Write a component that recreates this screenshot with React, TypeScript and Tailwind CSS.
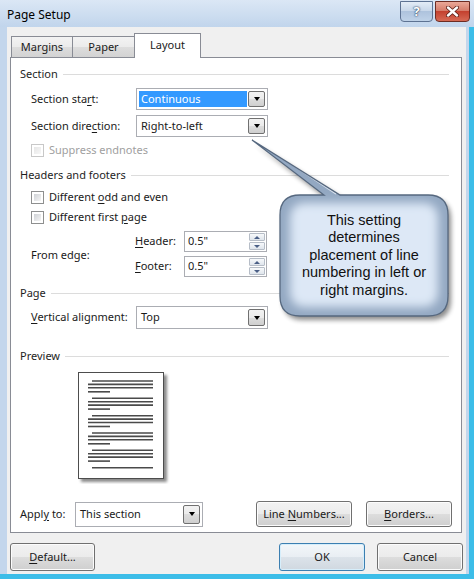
import React from "react"

// access-key underline
function U({ children }: { children: React.ReactNode }) {
  return <span className="underline decoration-1 underline-offset-[2px]">{children}</span>
}

function DownArrow() {
  return <span className="h-0 w-0 border-x-[3.5px] border-t-[4px] border-x-transparent border-t-black" />
}

function Combo({
  value,
  highlight = false,
  size,
}: {
  value: string
  highlight?: boolean
  size: string
}) {
  return (
    <div className={`flex items-stretch border border-[#abadb3] bg-white p-[2px] ${size}`}>
      <div className="flex flex-1 items-center pr-[1px]">
        <span
          className={`flex h-full w-full items-center px-[2px] ${
            highlight ? "bg-[#3399ff] text-white" : ""
          }`}
        >
          {value}
        </span>
      </div>
      <div className="flex w-[17px] items-center justify-center rounded-[2px] border border-[#707070] bg-[linear-gradient(#f2f2f2,#ebebeb_50%,#dddddd_50%,#cfcfcf)]">
        <DownArrow />
      </div>
    </div>
  )
}

function Spin({ value }: { value: string }) {
  return (
    <div className="flex h-[21px] w-[83px] border border-[#abadb3] bg-white">
      <span className="flex flex-1 items-center px-[3px]">{value}</span>
      <div className="flex w-[17px] flex-col gap-px py-px pr-px">
        <div className="flex flex-1 items-center justify-center rounded-[1px] border border-[#b6bdc7] bg-[linear-gradient(#f7f9fb,#dfe5ec)]">
          <span className="h-0 w-0 border-x-[3px] border-b-[3px] border-x-transparent border-b-[#4a5f86]" />
        </div>
        <div className="flex flex-1 items-center justify-center rounded-[1px] border border-[#b6bdc7] bg-[linear-gradient(#f7f9fb,#dfe5ec)]">
          <span className="h-0 w-0 border-x-[3px] border-t-[3px] border-x-transparent border-t-[#4a5f86]" />
        </div>
      </div>
    </div>
  )
}

function Check({ disabled = false }: { disabled?: boolean }) {
  return (
    <div
      className={`h-[13px] w-[13px] border bg-white p-[2px] ${
        disabled ? "border-[#c8c8c8]" : "border-[#8e8f8f]"
      }`}
    >
      <div
        className={`h-full w-full ${
          disabled
            ? "bg-[linear-gradient(135deg,#e6e6e6,#f7f7f7)]"
            : "bg-[linear-gradient(135deg,#cfd2d6,#f5f5f5)]"
        }`}
      />
    </div>
  )
}

function Heading({ children }: { children: React.ReactNode }) {
  return (
    <div className="mr-[3px] flex h-[16px] items-center gap-[5px] text-[#1e1e1e]">
      <span>{children}</span>
      <div className="h-px flex-1 bg-[#dcdcdc]" />
    </div>
  )
}

function WinButton({
  children,
  size,
  primary = false,
}: {
  children: React.ReactNode
  size: string
  primary?: boolean
}) {
  return (
    <div
      className={`flex items-center justify-center rounded-[3px] border ${size} ${
        primary
          ? "border-[#3c7fb1] bg-[linear-gradient(#f3f7fa,#e9eef3_50%,#dce3ea_50%,#d0d8e0)] shadow-[inset_0_0_0_1px_#d6eefb]"
          : "border-[#707070] bg-[linear-gradient(#f2f2f2,#ebebeb_50%,#dddddd_50%,#cfcfcf)] shadow-[inset_0_0_0_1px_#fcfcfc]"
      }`}
    >
      {children}
    </div>
  )
}

function PagePreview() {
  const groups = [9, 26.3, 43.7, 61, 78.3]
  return (
    <svg width="92" height="112" viewBox="0 0 92 112">
      <defs>
        <filter id="pshadow" x="-10%" y="-10%" width="130%" height="130%">
          <feGaussianBlur stdDeviation="1.6" />
        </filter>
      </defs>
      <rect x="3" y="3" width="86" height="107" fill="#8a8a8a" filter="url(#pshadow)" />
      <rect x="0.5" y="0.5" width="85" height="106" fill="#ffffff" stroke="#4d4d4d" />
      {groups.map((g) => (
        <g key={g} stroke="#4a4a4a" strokeWidth="1.6">
          <line x1="14" y1={g} x2="75" y2={g} />
          <line x1="10" y1={g + 3.4} x2="75" y2={g + 3.4} />
          <line x1="10" y1={g + 6.8} x2="75" y2={g + 6.8} />
          <line x1="10" y1={g + 10.8} x2="32" y2={g + 10.8} />
        </g>
      ))}
      <line x1="14" y1="95.7" x2="75" y2="95.7" stroke="#4a4a4a" strokeWidth="1.6" />
    </svg>
  )
}

function Callout() {
  const shape =
    "M60,65 L84,65 L12,10 L100,65 L188,65 Q208,65 208,85 L208,166 Q208,186 188,186 L60,186 Q40,186 40,166 L40,85 Q40,65 60,65 Z"
  return (
    <>
      <svg
        className="pointer-events-none absolute left-[240px] top-[130px]"
        width="222"
        height="200"
        viewBox="0 0 222 200"
      >
        <defs>
          <filter id="cshadow" x="-20%" y="-20%" width="140%" height="140%">
            <feGaussianBlur stdDeviation="2.5" />
          </filter>
          <filter id="glow" x="-20%" y="-20%" width="140%" height="140%">
            <feGaussianBlur stdDeviation="5" />
          </filter>
          <clipPath id="cclip">
            <path d={shape} />
          </clipPath>
        </defs>
        <path d={shape} transform="translate(3,4)" fill="#000" opacity="0.45" filter="url(#cshadow)" />
        <path d={shape} fill="#93a8c2" />
        <g clipPath="url(#cclip)">
          <rect x="50" y="73" width="148" height="104" rx="14" fill="#dde8f6" filter="url(#glow)" />
          <path d="M18,12 L96,64" stroke="#e9f0f8" strokeWidth="1.5" opacity="0.8" />
        </g>
        <path d={shape} fill="none" stroke="#56687f" strokeWidth="1.3" />
      </svg>
      <div className="absolute left-[280px] top-[195px] flex h-[121px] w-[168px] flex-col items-center justify-center text-center font-['Liberation_Sans',Arial,sans-serif] text-[14.5px] leading-[17.5px] text-[#111]">
        <span>This setting</span>
        <span>determines</span>
        <span>placement of line</span>
        <span>numbering in left or</span>
        <span>right margins.</span>
      </div>
    </>
  )
}

export default function App() {
  return (
    <div className="relative flex h-[579px] w-[474px] flex-col overflow-hidden bg-[#c3d6ec] font-['Noto_Sans','Open_Sans',sans-serif] text-[11px] text-[#1a1a1a]">
      {/* title bar */}
      <div className="flex h-[27px] items-start bg-[linear-gradient(#dbe7f5,#c1d5ec)] pl-[7px] pr-[4px]">
        <span className="mt-[6px] text-[12px] text-black">Page Setup</span>
        <div className="ml-auto mt-px flex gap-[2px]">
          <div className="flex h-[21px] w-[33px] items-center justify-center rounded-b-[4px] border border-[#5d7292] bg-[linear-gradient(#e3ecf6,#c9d8ea_45%,#aec3dd_50%,#bfd2e8)] text-[13px] font-bold text-white [text-shadow:0_0_2px_#1c3556,0_0_1px_#1c3556]">
            ?
          </div>
          <div className="flex h-[21px] w-[35px] items-center justify-center rounded-b-[4px] border border-[#6d2c23] bg-[linear-gradient(#eaa898,#d67d6b_45%,#c4412f_50%,#d66a55)]">
            <svg width="13" height="11" viewBox="0 0 13 11">
              <path d="M2,1.5 L11,9.5 M11,1.5 L2,9.5" stroke="#5a1d15" strokeWidth="4" strokeLinecap="round" />
              <path d="M2,1.5 L11,9.5 M11,1.5 L2,9.5" stroke="#ffffff" strokeWidth="2.4" strokeLinecap="round" />
            </svg>
          </div>
        </div>
      </div>

      <div className="flex flex-1">
        <div className="w-[7px]" />
        {/* client area */}
        <div className="flex flex-1 flex-col bg-[#f0f0f0] px-[3px] pb-[3px] pt-[6px]">
          {/* tabs */}
          <div className="relative z-10 ml-px flex h-[24px] items-start">
            <div className="mt-[3px] flex h-[21px] w-[62px] items-center justify-center border border-b-0 border-[#898c95] bg-[linear-gradient(#f3f3f3,#ebebeb_50%,#dddddd_50%,#d3d3d3)] pt-px">
              Margins
            </div>
            <div className="-ml-px mt-[3px] flex h-[21px] w-[63px] items-center justify-center border border-b-0 border-[#898c95] bg-[linear-gradient(#f3f3f3,#ebebeb_50%,#dddddd_50%,#d3d3d3)] pt-px">
              Paper
            </div>
            <div className="-ml-px flex h-[25px] w-[67px] items-center justify-center border border-b-0 border-[#898c95] bg-white pb-[2px]">
              Layout
            </div>
          </div>

          {/* panel */}
          <div className="mr-px flex h-[476px] flex-col border border-[#898c95] bg-white px-[9px] pt-[8px]">
            <Heading>Section</Heading>
            <div className="ml-[11px] mt-[6px] flex items-center">
              <span className="w-[105px]">
                Section sta<U>r</U>t:
              </span>
              <Combo value="Continuous" highlight size="h-[22px] w-[132px]" />
            </div>
            <div className="ml-[11px] mt-[5px] flex items-center">
              <span className="w-[105px]">
                Section dire<U>c</U>tion:
              </span>
              <Combo value="Right-to-left" size="h-[22px] w-[132px]" />
            </div>
            <div className="ml-[11px] mt-[5px] flex h-[16px] items-center gap-[5px] text-[#a0a0a0]">
              <Check disabled />
              <span>Suppress endnotes</span>
            </div>

            <div className="mt-[9px]">
              <Heading>Headers and footers</Heading>
            </div>
            <div className="ml-[11px] mt-[6px] flex h-[16px] items-center gap-[5px]">
              <Check />
              <span>
                Different <U>o</U>dd and even
              </span>
            </div>
            <div className="ml-[11px] mt-[4px] flex h-[16px] items-center gap-[5px]">
              <Check />
              <span>
                Different first <U>p</U>age
              </span>
            </div>
            <div className="ml-[11px] mt-[6px] flex items-center">
              <span className="w-[104px] pt-[3px]">From edge:</span>
              <div className="flex flex-col gap-[4px]">
                <div className="flex items-center">
                  <span className="w-[49px]">
                    <U>H</U>eader:
                  </span>
                  <Spin value={'0.5"'} />
                </div>
                <div className="flex items-center">
                  <span className="w-[49px]">
                    <U>F</U>ooter:
                  </span>
                  <Spin value={'0.5"'} />
                </div>
              </div>
            </div>

            <div className="mt-[8px]">
              <Heading>Page</Heading>
            </div>
            <div className="ml-[11px] mt-[5px] flex items-center">
              <span className="w-[105px]">
                <U>V</U>ertical alignment:
              </span>
              <Combo value="Top" size="h-[23px] w-[132px]" />
            </div>

            <div className="mt-[19px]">
              <Heading>Preview</Heading>
            </div>
            <div className="ml-[58px] mt-[8px] h-[110px]">
              <PagePreview />
            </div>

            <div className="mt-[19px] flex h-[26px] items-center">
              <span className="w-[55px]">
                Appl<U>y</U> to:
              </span>
              <Combo value="This section" size="h-[25px] w-[128px]" />
              <div className="ml-auto flex gap-[14px]">
                <WinButton size="h-[26px] w-[96px]">
                  <span>
                    Line <U>N</U>umbers...
                  </span>
                </WinButton>
                <WinButton size="h-[26px] w-[86px]">
                  <span>
                    <U>B</U>orders...
                  </span>
                </WinButton>
              </div>
            </div>
          </div>

          {/* bottom buttons */}
          <div className="mt-[10px] flex h-[28px]">
            <WinButton size="h-[28px] w-[85px]">
              <span>
                <U>D</U>efault...
              </span>
            </WinButton>
            <div className="ml-auto flex gap-[12px]">
              <WinButton primary size="h-[28px] w-[86px]">
                OK
              </WinButton>
              <WinButton size="h-[28px] w-[86px]">Cancel</WinButton>
            </div>
          </div>
        </div>
        <div className="w-[3px]" />
        <div className="w-[5px] bg-[#3cbde8]" />
      </div>
      <div className="h-[5px] bg-[#3cbde8]" />

      <Callout />
    </div>
  )
}
